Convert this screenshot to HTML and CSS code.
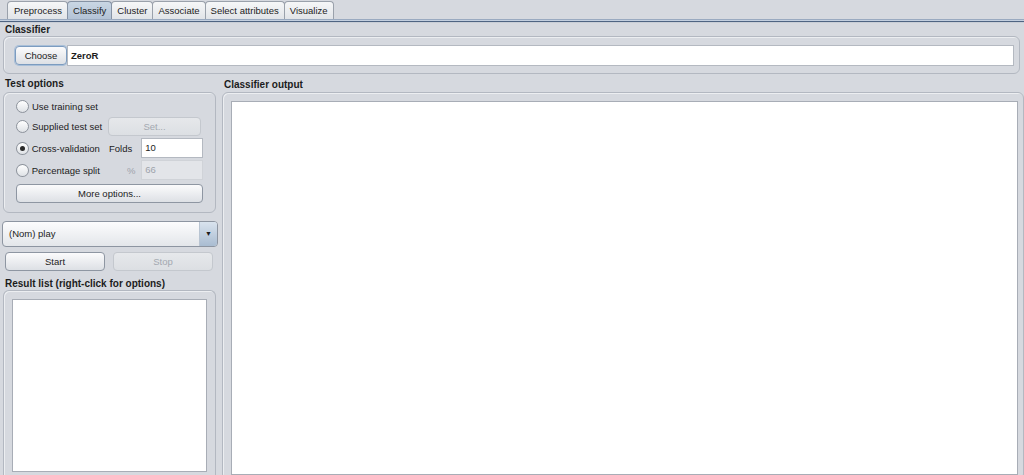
FILE: index.html
```html
<!DOCTYPE html>
<html lang="en">
<head>
    <meta charset="UTF-8">
    <title>Weka Explorer - Classify</title>
    <link rel="stylesheet" href="styles.css">
</head>
<body>
    <div class="tabs">
        <div class="tab first">Preprocess</div>
        <div class="tab selected">Classify</div>
        <div class="tab">Cluster</div>
        <div class="tab">Associate</div>
        <div class="tab">Select attributes</div>
        <div class="tab">Visualize</div>
    </div>
    <div class="tabline"></div>

    <!-- classifier chooser -->
    <div class="label">Classifier</div>
    <div class="panel chooser">
        <button class="btn focus choose">Choose</button>
        <div class="field scheme">ZeroR</div>
    </div>

    <div class="main">
        <div class="left">
            <div class="label">Test options</div>
            <div class="panel options">
                <div class="row r1">
                    <span class="radio"></span><span class="opt">Use training set</span>
                </div>
                <div class="row r2">
                    <span class="radio"></span><span class="opt">Supplied test set</span>
                    <button class="btn disabled set">Set...</button>
                </div>
                <div class="row r3">
                    <span class="radio on"></span><span class="opt">Cross-validation</span>
                    <span class="side">Folds</span>
                    <div class="field small">10</div>
                </div>
                <div class="row r4">
                    <span class="radio"></span><span class="opt">Percentage split</span>
                    <span class="side dim pct">%</span>
                    <div class="field small off">66</div>
                </div>
                <button class="btn more">More options...</button>
            </div>

            <div class="combo">
                <span class="combo-text">(Nom) play</span>
                <span class="combo-arrow">&#9660;</span>
            </div>

            <div class="runbar">
                <button class="btn run">Start</button>
                <button class="btn run disabled">Stop</button>
            </div>

            <div class="label">Result list (right-click for options)</div>
            <div class="panel results">
                <div class="white"></div>
            </div>
        </div>

        <div class="right">
            <div class="label">Classifier output</div>
            <div class="panel output">
                <div class="white"></div>
            </div>
        </div>
    </div>
</body>
</html>
```

FILE: styles.css
```css
* { box-sizing: border-box; }
body {
    margin: 0;
    width: 1024px;
    height: 475px;
    overflow: hidden;
    background: #d6d9df;
    font-family: "Liberation Sans", Arial, sans-serif;
    font-size: 9.5px;
    color: #1c1c1c;
}
.tabs {
    display: flex;
    align-items: flex-end;
    height: 19px;
    padding-left: 7px;
}
.tab {
    height: 18px;
    line-height: 17px;
    padding: 0 5px;
    margin-right: -1px;
    border: 1px solid #9aa1ab;
    border-bottom: none;
    border-radius: 4px 4px 0 0;
    background: linear-gradient(#f6f7f8, #e1e4e8);
}
.tab.first { padding-left: 6px; }
.tab.selected {
    background: linear-gradient(#c9d6e4, #b3c3d6);
    border-color: #8592a4;
    position: relative;
}
.tabline {
    height: 4px;
    background: linear-gradient(#9aaac0 0 1px, #c3cfdf 1px 2px, #4f6482 2px 3px, #c9ced6 3px 4px);
}
.label {
    font-weight: bold;
    font-size: 10px;
    height: 13px;
    line-height: 13px;
    padding-left: 5px;
}
.panel {
    border: 1px solid #b3b8c1;
    border-radius: 6px;
    box-shadow: inset 1px 1px 0 #eceef1;
}
.chooser {
    display: flex;
    align-items: center;
    margin: 0 4px 0 3px;
    height: 38px;
    padding: 0 5px 0 11px;
}
.btn {
    font: inherit;
    color: #1c1c1c;
    border: 1px solid #8e96a2;
    border-radius: 4px;
    background: linear-gradient(#fbfbfc, #dde0e5);
    height: 19px;
    padding: 0;
    text-align: center;
}
.btn.focus { border-color: #7c9cc0; box-shadow: 0 0 0 1px #a9bfd8; }
.btn.disabled {
    color: #a3a8b0;
    border-color: #c4c8ce;
    background: linear-gradient(#e6e8eb, #dcdfe3);
}
.choose { width: 52px; }
.field {
    background: #fff;
    border: 1px solid #b4b9c1;
    height: 21px;
    line-height: 19px;
    padding-left: 3px;
}
.scheme {
    flex: 1;
    font-weight: bold;
}
.main {
    display: grid;
    grid-template-columns: 216px 1fr;
    column-gap: 4px;
    margin-top: 3px;
    padding-left: 2px;
}
.left .label { padding-left: 3px; }
.right .label { padding-left: 2px; margin-top: 1px; }
.options {
    margin: 2px 0 8px 1px;
    width: 213px;
    height: 121px;
    padding: 5px 12px 0 12px;
}
.row {
    display: flex;
    align-items: center;
}
.r1 { height: 16px; }
.r2 { height: 24px; }
.r3 { height: 20px; }
.r4 { height: 24px; }
.radio {
    width: 13px;
    height: 13px;
    border-radius: 50%;
    border: 1px solid #8d939c;
    background: linear-gradient(#ffffff, #dfe2e6);
    margin-right: 3px;
    position: relative;
}
.radio.on::after {
    content: "";
    position: absolute;
    left: 3px;
    top: 3px;
    width: 5px;
    height: 5px;
    border-radius: 50%;
    background: #2a2a2a;
}
.opt { width: 79px; }
.set { width: 93px; margin-left: -3px; }
.side { width: 33px; }
.side.dim { color: #9ea3ab; }
.pct { text-align: right; padding-right: 6px; }
.small { width: 63px; height: 20px; line-height: 18px; }
.field.off {
    background: #e3e5e9;
    border-color: #d0d3d8;
    color: #9ea3ab;
}
.more {
    display: block;
    width: 187px;
    margin-top: 2px;
}
.combo {
    display: flex;
    height: 26px;
    border: 1px solid #8d95a1;
    border-radius: 4px;
    background: linear-gradient(#fcfcfd, #e3e6ea);
    overflow: hidden;
}
.combo-text {
    flex: 1;
    line-height: 24px;
    padding-left: 6px;
}
.combo-arrow {
    width: 18px;
    font-size: 7px;
    line-height: 24px;
    text-align: center;
    background: linear-gradient(#d9e3ee, #a9bcd1);
    border-left: 1px solid #b8c4d2;
}
.runbar {
    display: flex;
    gap: 8px;
    padding-left: 3px;
    margin: 5px 0 6px;
}
.run { width: 100px; }
.results {
    margin-left: 1px;
    width: 213px;
    height: 190px;
    padding: 8px 8px 0 8px;
    border-bottom: none;
}
.white {
    background: #fff;
    border: 1px solid #a8adb6;
    height: 100%;
}
.results .white { height: 173px; }
.output {
    margin-top: 1px;
    height: 388px;
    padding: 8px 5px 4px 8px;
}
```
